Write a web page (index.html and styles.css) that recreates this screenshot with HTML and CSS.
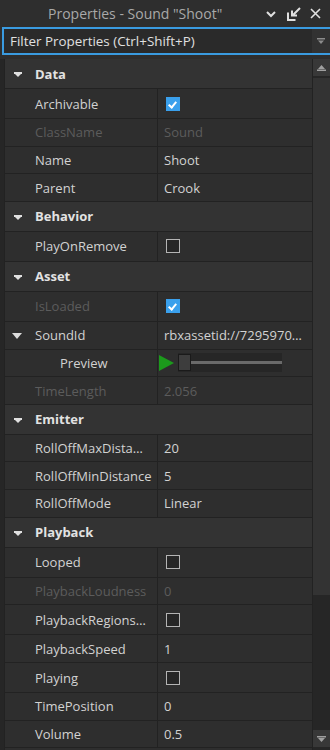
FILE: index.html
```html
<!DOCTYPE html>
<html lang="en">
<head>
    <meta charset="UTF-8">
    <meta name="viewport" content="width=device-width, initial-scale=1.0">
    <title>Properties - Sound "Shoot"</title>
    <link rel="stylesheet" href="styles.css">
</head>
<body>
    <div class="panel">
        <div class="titlebar">
            <span class="title">Properties - Sound "Shoot"</span>
            <div class="title-icons">
                <svg class="ic-min" width="10" height="8" viewBox="0 0 10 8"><path d="M1 2l4 4 4-4" fill="none" stroke="#e0e0e0" stroke-width="2"/></svg>
                <svg class="ic-dock" width="14" height="14" viewBox="0 0 14 14"><path d="M1 5.5v7.5h7.5" fill="none" stroke="#e0e0e0" stroke-width="2"/><path d="M13 1L6 8M5 3.5v5h5" fill="none" stroke="#e0e0e0" stroke-width="2"/></svg>
                <svg class="ic-close" width="11" height="11" viewBox="0 0 11 11"><path d="M1 1l9 9M10 1l-9 9" fill="none" stroke="#e0e0e0" stroke-width="1.6"/></svg>
            </div>
        </div>

        <div class="filter">
            <span class="filter-text">Filter Properties (Ctrl+Shift+P)</span>
            <span class="filter-drop"><svg width="8" height="6" viewBox="0 0 8 6"><path d="M0 0h8v1.5H0zM1 2.5h6L4 6z" fill="#8c8c8c"/></svg></span>
        </div>

        <div class="content">
            <div class="list">
                <div class="section"><span class="sec-arrow"></span>Data</div>
                <div class="row tall"><div class="name">Archivable</div><div class="value"><span class="check on"></span></div></div>
                <div class="row"><div class="name off">ClassName</div><div class="value off">Sound</div></div>
                <div class="row"><div class="name">Name</div><div class="value">Shoot</div></div>
                <div class="row"><div class="name">Parent</div><div class="value">Crook</div></div>

                <div class="section"><span class="sec-arrow"></span>Behavior</div>
                <div class="row tall"><div class="name">PlayOnRemove</div><div class="value"><span class="check"></span></div></div>

                <div class="section"><span class="sec-arrow"></span>Asset</div>
                <div class="row tall"><div class="name off">IsLoaded</div><div class="value"><span class="check on"></span></div></div>
                <div class="row"><div class="name"><span class="expand"></span>SoundId</div><div class="value">rbxassetid://7295970…</div></div>
                <div class="row">
                    <div class="name sub">Preview</div>
                    <div class="value">
                        <span class="play"></span>
                        <span class="slider"><span class="thumb"></span><span class="track"></span></span>
                    </div>
                </div>
                <div class="row"><div class="name off">TimeLength</div><div class="value off">2.056</div></div>

                <div class="section"><span class="sec-arrow"></span>Emitter</div>
                <div class="row"><div class="name">RollOffMaxDista…</div><div class="value">20</div></div>
                <div class="row"><div class="name">RollOffMinDistance</div><div class="value">5</div></div>
                <div class="row"><div class="name">RollOffMode</div><div class="value">Linear</div></div>

                <div class="section"><span class="sec-arrow"></span>Playback</div>
                <div class="row tall"><div class="name">Looped</div><div class="value"><span class="check"></span></div></div>
                <div class="row"><div class="name off">PlaybackLoudness</div><div class="value off">0</div></div>
                <div class="row tall"><div class="name">PlaybackRegions…</div><div class="value"><span class="check"></span></div></div>
                <div class="row"><div class="name">PlaybackSpeed</div><div class="value">1</div></div>
                <div class="row tall"><div class="name">Playing</div><div class="value"><span class="check"></span></div></div>
                <div class="row"><div class="name">TimePosition</div><div class="value">0</div></div>
                <div class="row"><div class="name">Volume</div><div class="value">0.5</div></div>
            </div>

            <div class="scrollbar">
                <div class="sb-btn"><svg width="9" height="6" viewBox="0 0 9 6"><path d="M4.5 0L8 4H1z M0 4.5h9V6H0z" fill="#a0a0a0"/></svg></div>
                <div class="sb-thumb"></div>
                <div class="sb-track"></div>
                <div class="sb-btn"><svg width="9" height="6" viewBox="0 0 9 6"><path d="M0 0h9v1.5H0zM1 2h7L4.5 6z" fill="#a0a0a0"/></svg></div>
            </div>
        </div>
    </div>
</body>
</html>
```

FILE: styles.css
```css
body {
    margin: 0;
    background-color: #2e2e2e;
    font-family: "Open Sans", "Noto Sans", sans-serif;
    font-size: 13px;
    color: #d2d2d2;
}
.panel {
    width: 330px;
    height: 750px;
    display: flex;
    flex-direction: column;
    background-color: #2e2e2e;
    overflow: hidden;
}
.titlebar {
    height: 27px;
    display: flex;
    align-items: center;
}
.title {
    margin-left: 48px;
    font-size: 14px;
    color: #a9a9a9;
}
.title-icons {
    margin-left: auto;
    margin-right: 9px;
    display: flex;
    align-items: center;
}
.ic-dock {
    margin-left: 11px;
}
.ic-close {
    margin-left: 9px;
}
.filter {
    height: 24px;
    margin: 0 0 4px 2px;
    border: 2px solid #3a9be0;
    border-right: none;
    background-color: #2a2a2a;
    display: flex;
    align-items: center;
}
.filter-text {
    margin-left: 6px;
    font-size: 13.4px;
    color: #e0e0e0;
}
.filter-drop {
    margin-left: auto;
    width: 18px;
    height: 100%;
    background-color: #323232;
    display: flex;
    align-items: center;
    justify-content: center;
}
.content {
    flex: 1;
    display: flex;
    padding-left: 4px;
    background-color: #262626;
}
.list {
    width: 308px;
    border-left: 1px solid #222;
    background-color: #2e2e2e;
}
.section {
    height: 29px;
    border-bottom: 1px solid #222;
    background-color: #333333;
    display: flex;
    align-items: center;
    padding-left: 30px;
    position: relative;
    font-weight: bold;
    color: #e2e2e2;
}
.sec-arrow {
    position: absolute;
    left: 9px;
    top: 13px;
    width: 8px;
    height: 2px;
    background-color: #e0e0e0;
}
.sec-arrow::after {
    content: "";
    position: absolute;
    left: 1px;
    top: 2px;
    border-left: 3px solid transparent;
    border-right: 3px solid transparent;
    border-top: 3px solid #e0e0e0;
}
.row {
    height: 26.65px;
    border-bottom: 1px solid #222;
    display: grid;
    grid-template-columns: 153px 1fr;
}
.row.tall {
    height: 29px;
}
.name {
    border-right: 1px solid #222;
    display: flex;
    align-items: center;
    padding-left: 30px;
    position: relative;
    white-space: nowrap;
    overflow: hidden;
}
.name.sub {
    padding-left: 55px;
}
.off {
    color: #5c5c5c;
}
.value {
    display: flex;
    align-items: center;
    padding-left: 6px;
    white-space: nowrap;
    overflow: hidden;
}
.expand {
    position: absolute;
    left: 7px;
    top: 11px;
    border-left: 5px solid transparent;
    border-right: 5px solid transparent;
    border-top: 6px solid #dcdcdc;
}
.check {
    width: 12px;
    height: 12px;
    border: 1px solid #b4b4b4;
    background-color: #262626;
    margin-left: 2px;
}
.check.on {
    width: 14px;
    height: 14px;
    border: none;
    background-color: #3aa0ec;
    position: relative;
}
.check.on::after {
    content: "";
    position: absolute;
    left: 4px;
    top: 3px;
    width: 3px;
    height: 6px;
    border-right: 2px solid #fff;
    border-bottom: 2px solid #fff;
    transform: rotate(40deg);
}
.play {
    width: 0;
    height: 0;
    margin-left: -5px;
    border-top: 8px solid transparent;
    border-bottom: 8px solid transparent;
    border-left: 15px solid #1c9a1c;
}
.slider {
    width: 104px;
    height: 19px;
    margin-left: 4px;
    background-color: #262626;
    display: flex;
    align-items: center;
}
.thumb {
    width: 11px;
    height: 15px;
    border: 1px solid #1a1a1a;
    background-color: #3d3d3d;
}
.track {
    width: 91px;
    height: 3px;
    background-color: #6a6a6a;
}
.scrollbar {
    width: 17px;
    border-left: 1px solid #222;
    display: flex;
    flex-direction: column;
    background-color: #262626;
}
.sb-btn {
    height: 17px;
    background-color: #383838;
    display: flex;
    align-items: center;
    justify-content: center;
}
.sb-thumb {
    height: 517px;
    margin-top: 2px;
    background-color: #333333;
}
.sb-track {
    flex: 1;
}
.sb-btn:last-child {
    margin-bottom: 3px;
}
```
